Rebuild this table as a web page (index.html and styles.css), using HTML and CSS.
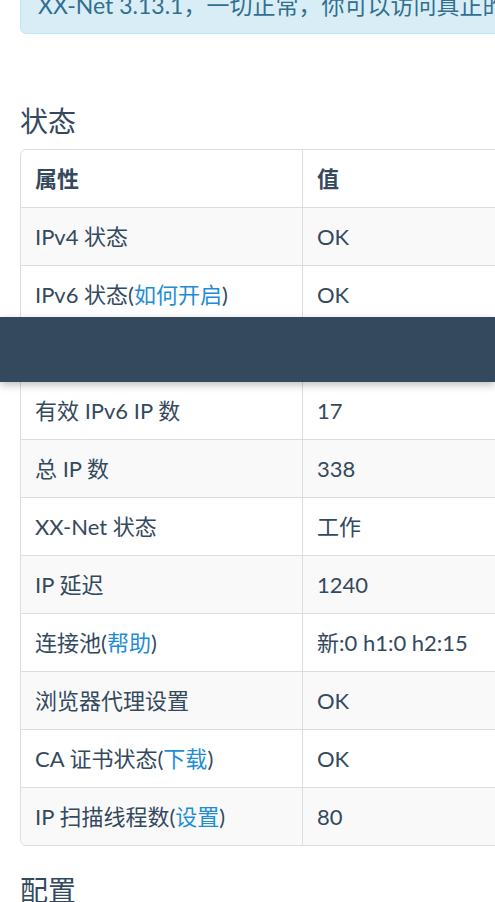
FILE: index.html
```html
<!DOCTYPE html>
<html lang="zh-CN">
<head>
<meta charset="utf-8">
<title>XX-Net 状态</title>
<link rel="stylesheet" href="styles.css">
</head>
<body>
<div class="page">
  <div class="alert">XX-Net 3.13.1，一切正常，你可以访问真正的互联网了。</div>

  <h2 class="section-title">状态</h2>
  <div class="table-wrap">
    <table class="status-table">
      <thead>
        <tr><th class="col-key">属性</th><th>值</th></tr>
      </thead>
      <tbody>
        <tr><td>IPv4 状态</td><td>OK</td></tr>
        <tr><td>IPv6 状态(<a href="#">如何开启</a>)</td><td>OK</td></tr>
        <tr><td>有效 IPv4 IP 数</td><td>321</td></tr>
        <tr><td>有效 IPv6 IP 数</td><td>17</td></tr>
        <tr><td>总 IP 数</td><td>338</td></tr>
        <tr><td>XX-Net 状态</td><td>工作</td></tr>
        <tr><td>IP 延迟</td><td>1240</td></tr>
        <tr><td>连接池(<a href="#">帮助</a>)</td><td>新:0 h1:0 h2:15</td></tr>
        <tr><td>浏览器代理设置</td><td>OK</td></tr>
        <tr><td>CA 证书状态(<a href="#">下载</a>)</td><td>OK</td></tr>
        <tr><td>IP 扫描线程数(<a href="#">设置</a>)</td><td>80</td></tr>
      </tbody>
    </table>
  </div>

  <h2 class="section-title config-title">配置</h2>
</div>
<div class="overlay-bar"></div>
</body>
</html>
```

FILE: styles.css
```css
html, body {
  margin: 0;
  padding: 0;
  overflow: hidden;
  background: #ffffff;
}

body {
  font-family: Lato, "Noto Sans CJK SC", sans-serif;
  color: #34495e;
  font-size: 22px;
}

.page {
  padding-left: 20px;
  width: 760px;
}

.alert {
  margin-top: -22px;
  padding: 10px 17px 12px;
  background: #d9edf7;
  border: 1px solid #bce8f1;
  border-radius: 6px;
  color: #31708f;
  font-size: 23px;
  line-height: 32px;
  white-space: nowrap;
}

.section-title {
  margin: 67px 0 0;
  font-size: 28px;
  font-weight: normal;
  line-height: 40px;
  height: 48px;
}

.table-wrap {
  border: 1px solid #dddddd;
  border-radius: 6px;
  overflow: hidden;
}

.status-table {
  width: 100%;
  border-collapse: collapse;
}

.status-table th,
.status-table td {
  text-align: left;
  padding: 13px 14px;
  line-height: 31px;
  border-top: 1px solid #dddddd;
  white-space: nowrap;
}

.status-table th {
  border-top: none;
  font-weight: bold;
}

.status-table td:first-child,
.status-table th:first-child {
  width: 253px;
  border-right: 1px solid #dddddd;
}

.status-table tbody tr:nth-child(odd) {
  background: #f9f9f9;
}

.status-table a {
  color: #1f8dd6;
  text-decoration: none;
}

.config-title {
  margin-top: 24px;
}

.overlay-bar {
  position: fixed;
  left: 0;
  right: 0;
  top: 317px;
  height: 65px;
  background: #34495e;
  box-shadow: 0 3px 8px rgba(0, 0, 0, 0.25);
}
```
